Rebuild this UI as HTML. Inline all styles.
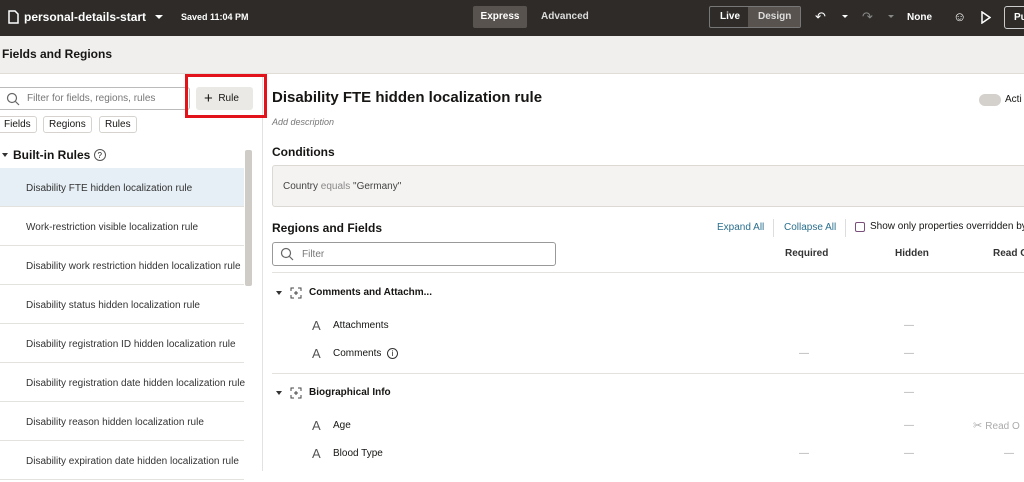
<!DOCTYPE html>
<html><head><style>
*{box-sizing:border-box;margin:0;padding:0}
body{width:1024px;height:471px;overflow:hidden;font-family:"Liberation Sans",sans-serif;background:#fff;color:#161513;position:relative;font-size:11px}
.a{position:absolute;white-space:nowrap}
.hdr{left:0;top:0;width:1024px;height:36px;background:#2e2b28;color:#fff}
.sub{left:0;top:36px;width:1024px;height:38px;background:#f1efed;border-bottom:1px solid #e0ddd9}
.row{left:0;width:244px;height:39px;border-bottom:1px solid #e4e2df;padding-left:26px;line-height:41px;font-size:10px;color:#333}
.chip{top:116px;height:17px;border:1px solid #d6d3cf;border-radius:3px;font-size:10px;line-height:15px;padding:0 5px;background:#fff}
.dash{color:#aaa;font-size:10px}
.fA{font-size:13px;color:#555}
</style></head><body>
<div class="a hdr">
 <svg class="a" style="left:8px;top:10px" width="11" height="14"><path d="M1 1h6l3 3v9H1z" fill="none" stroke="#fff" stroke-width="1.5"/></svg>
 <div class="a" style="left:24px;top:10px;font-size:12px;font-weight:bold">personal-details-start</div>
 <div class="a" style="left:155px;top:15px;border-left:4px solid transparent;border-right:4px solid transparent;border-top:4px solid #fff"></div>
 <div class="a" style="left:181px;top:12px;font-size:9px;font-weight:bold">Saved 11:04 PM</div>
 <div class="a" style="left:473px;top:6px;width:54px;height:22px;background:#58534f;border-radius:2px;font-size:10px;font-weight:bold;text-align:center;line-height:22px">Express</div>
 <div class="a" style="left:541px;top:11px;font-size:10px;font-weight:bold;color:#ddd">Advanced</div>
 <div class="a" style="left:709px;top:6px;width:92px;height:22px;border:1px solid #777;border-radius:2px"></div>
 <div class="a" style="left:748px;top:7px;width:52px;height:20px;background:#58534f"></div>
 <div class="a" style="left:720px;top:11px;font-size:10px;font-weight:bold">Live</div>
 <div class="a" style="left:758px;top:11px;font-size:10px;font-weight:bold;color:#ddd">Design</div>
 <div class="a" style="left:815px;top:9px;font-size:13px">↶</div>
 <div class="a" style="left:842px;top:15px;border-left:3px solid transparent;border-right:3px solid transparent;border-top:3px solid #fff"></div>
 <div class="a" style="left:862px;top:9px;font-size:13px;color:#888">↷</div>
 <div class="a" style="left:888px;top:15px;border-left:3px solid transparent;border-right:3px solid transparent;border-top:3px solid #888"></div>
 <div class="a" style="left:907px;top:12px;font-size:10px;font-weight:bold">None</div>
 <div class="a" style="left:953px;top:9px;font-size:13px">☺</div>
 <svg class="a" style="left:981px;top:11px" width="10" height="13"><path d="M1 1l8 5.5L1 12z" fill="none" stroke="#fff" stroke-width="1.5"/></svg>
 <div class="a" style="left:1004px;top:6px;width:30px;height:23px;border:1px solid #ccc;border-radius:3px;font-size:10px;font-weight:bold;padding:5px 0 0 9px">Pu</div>
</div>
<div class="a sub"><div class="a" style="left:2px;top:11px;font-size:12px;font-weight:bold">Fields and Regions</div></div>
<div class="a" style="left:262px;top:74px;width:1px;height:397px;background:#e4e2df"></div>
<div class="a" style="left:0;top:87px;width:190px;height:23px;border:1px solid #bbb;border-left:none;border-radius:0 3px 3px 0"></div>
<svg class="a" style="left:6px;top:92px" width="14" height="14"><circle cx="6" cy="6" r="4.5" fill="none" stroke="#666" stroke-width="1.2"/><path d="M9.5 9.5l3.5 3.5" stroke="#666" stroke-width="1.2"/></svg>
<div class="a" style="left:27px;top:93px;font-size:10px;color:#777">Filter for fields, regions, rules</div>
<div class="a" style="left:196px;top:87px;width:57px;height:23px;background:#ebe9e6;border-radius:3px;font-size:10px;line-height:23px;padding-left:8px"><span style="font-size:15px;vertical-align:-2px">+</span>&nbsp; Rule</div>
<div class="a" style="left:185px;top:74px;width:82px;height:44px;border:3px solid #e3131c"></div>
<div class="a chip" style="left:0;border-left:none;border-radius:0 3px 3px 0;padding-left:4px">Fields</div>
<div class="a chip" style="left:43px">Regions</div>
<div class="a chip" style="left:99px">Rules</div>
<div class="a" style="left:2px;top:153px;border-left:3px solid transparent;border-right:3px solid transparent;border-top:4px solid #333"></div>
<div class="a" style="left:13px;top:148px;font-size:12px;font-weight:bold">Built-in Rules <span style="display:inline-block;width:12px;height:12px;border:1px solid #555;border-radius:50%;font-size:8px;text-align:center;line-height:11px;font-weight:normal;vertical-align:1px">?</span></div>
<div class="a row" style="top:168px;background:#e5eff5">Disability FTE hidden localization rule</div>
<div class="a row" style="top:207px">Work-restriction visible localization rule</div>
<div class="a row" style="top:246px">Disability work restriction hidden localization rule</div>
<div class="a row" style="top:285px">Disability status hidden localization rule</div>
<div class="a row" style="top:324px">Disability registration ID hidden localization rule</div>
<div class="a row" style="top:363px">Disability registration date hidden localization rule</div>
<div class="a row" style="top:402px">Disability reason hidden localization rule</div>
<div class="a row" style="top:441px">Disability expiration date hidden localization rule</div>
<div class="a" style="left:245px;top:150px;width:7px;height:136px;background:#cfccc8;border-radius:2px"></div>
<div class="a" style="left:272px;top:89px;font-size:15px;font-weight:bold">Disability FTE hidden localization rule</div>
<div class="a" style="left:272px;top:117px;font-size:9px;font-style:italic;color:#777">Add description</div>
<div class="a" style="left:979px;top:94px;width:22px;height:12px;background:#d4d1cd;border-radius:6px"></div>
<div class="a" style="left:1005px;top:94px;font-size:10px">Acti</div>
<div class="a" style="left:272px;top:145px;font-size:12px;font-weight:bold">Conditions</div>
<div class="a" style="left:272px;top:165px;width:760px;height:42px;background:#f4f3f1;border:1px solid #dcd9d5;border-radius:3px;font-size:10px;line-height:42px;padding-left:10px;color:#444">Country <span style="color:#888">equals</span> "Germany"</div>
<div class="a" style="left:272px;top:221px;font-size:12px;font-weight:bold">Regions and Fields</div>
<div class="a" style="left:717px;top:222px;font-size:10px;color:#2a6f8e">Expand All</div>
<div class="a" style="left:773px;top:219px;width:1px;height:18px;background:#ddd"></div>
<div class="a" style="left:784px;top:222px;font-size:10px;color:#2a6f8e">Collapse All</div>
<div class="a" style="left:845px;top:219px;width:1px;height:18px;background:#ddd"></div>
<div class="a" style="left:855px;top:222px;width:10px;height:10px;border:1px solid #7a4e7a;border-radius:2px"></div>
<div class="a" style="left:870px;top:221px;font-size:10px">Show only properties overridden by</div>
<div class="a" style="left:272px;top:242px;width:284px;height:24px;border:1px solid #999;border-radius:3px"></div>
<svg class="a" style="left:280px;top:247px" width="14" height="14"><circle cx="6" cy="6" r="4.5" fill="none" stroke="#666" stroke-width="1.2"/><path d="M9.5 9.5l3.5 3.5" stroke="#666" stroke-width="1.2"/></svg>
<div class="a" style="left:302px;top:249px;font-size:10px;color:#777">Filter</div>
<div class="a" style="left:785px;top:248px;font-size:10px;font-weight:bold;color:#333">Required</div>
<div class="a" style="left:895px;top:248px;font-size:10px;font-weight:bold;color:#333">Hidden</div>
<div class="a" style="left:993px;top:248px;font-size:10px;font-weight:bold;color:#333">Read O</div>
<div class="a" style="left:272px;top:272px;width:752px;height:1px;background:#e4e2df"></div>
<div class="a" style="left:272px;top:373px;width:752px;height:1px;background:#e4e2df"></div>
<div class="a" style="left:276px;top:291px;border-left:3px solid transparent;border-right:3px solid transparent;border-top:4px solid #333"></div>
<svg class="a" style="left:290px;top:287px" width="12" height="12"><path d="M1 4V1h3M8 1h3v3M11 8v3H8M4 11H1V8" fill="none" stroke="#444"/><path d="M4 6h4M6 4v4" stroke="#444"/></svg>
<div class="a" style="left:309px;top:287px;font-size:10px;font-weight:bold">Comments and Attachm...</div>
<div class="a fA" style="left:312px;top:318px">A</div><div class="a" style="left:333px;top:320px;font-size:10px">Attachments</div>
<div class="a fA" style="left:312px;top:346px">A</div><div class="a" style="left:333px;top:348px;font-size:10px">Comments &nbsp;<span style="display:inline-block;width:11px;height:11px;border:1px solid #333;border-radius:50%;font-size:8px;text-align:center;line-height:10px">i</span></div>
<div class="a" style="left:276px;top:391px;border-left:3px solid transparent;border-right:3px solid transparent;border-top:4px solid #333"></div>
<svg class="a" style="left:290px;top:387px" width="12" height="12"><path d="M1 4V1h3M8 1h3v3M11 8v3H8M4 11H1V8" fill="none" stroke="#444"/><path d="M4 6h4M6 4v4" stroke="#444"/></svg>
<div class="a" style="left:309px;top:387px;font-size:10px;font-weight:bold">Biographical Info</div>
<div class="a fA" style="left:312px;top:418px">A</div><div class="a" style="left:333px;top:420px;font-size:10px">Age</div>
<div class="a fA" style="left:312px;top:446px">A</div><div class="a" style="left:333px;top:448px;font-size:10px">Blood Type</div>
<div class="a dash" style="left:904px;top:320px">—</div>
<div class="a dash" style="left:799px;top:348px">—</div><div class="a dash" style="left:904px;top:348px">—</div>
<div class="a dash" style="left:904px;top:387px">—</div>
<div class="a dash" style="left:904px;top:420px">—</div>
<div class="a" style="left:973px;top:419px;font-size:11px;color:#aaa">✂ <span style="font-size:10px">Read O</span></div>
<div class="a dash" style="left:799px;top:448px">—</div><div class="a dash" style="left:904px;top:448px">—</div><div class="a dash" style="left:1004px;top:448px">—</div>
</body></html>
